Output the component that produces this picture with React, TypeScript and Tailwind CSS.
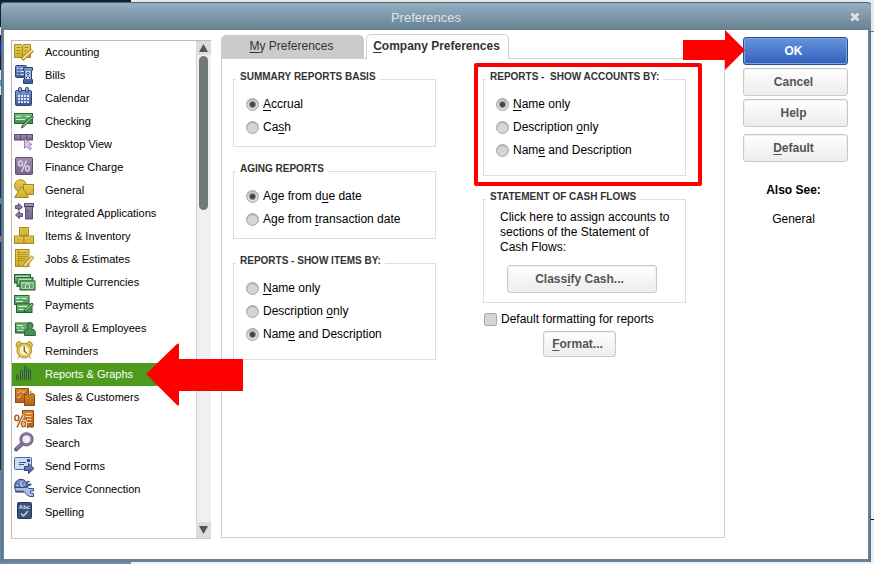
import { useState } from "react";
import type { ReactNode } from "react";

const GOLD = { fill: "url(#gold)", stroke: "#a8871c" };
const BLUE = { fill: "url(#blue)", stroke: "#2f4578" };
const GREEN = { fill: "url(#green)", stroke: "#2b6338" };
const PURPLE = { fill: "url(#purple)", stroke: "#5d4d70" };
const ORANGE = { fill: "url(#orange)", stroke: "#8f4a10" };

const categories: { name: string; icon: ReactNode }[] = [
  {
    name: "Accounting",
    icon: (
      <>
        <path {...GOLD} d="M1.500 3.500h7l1 1 1-1h7v13h-16z" />
        <path d="M9.500 5v11" stroke="#a8871c" />
        <path d="M3.500 6.500h4M3.500 9.500h4M3.500 12.500h4M11.500 6.500h4M11.500 9.500h2" stroke="#a8871c" />
        <path d="M9 18.500l10.500-9.500" stroke="#a8871c" strokeWidth="4" />
        <path d="M9.800 17.800l9.500-8.800" stroke="#f5dd91" strokeWidth="2.200" />
      </>
    ),
  },
  {
    name: "Bills",
    icon: (
      <>
        <rect {...BLUE} x="2.500" y="1.500" width="11" height="12" rx="1" />
        <path d="M4 4.500h1.500M7 4.500h5M4 7.500h1.500M7 7.500h4M4 10.500h1.500M7 10.500h4" stroke="#cfdcf5" />
        <path {...BLUE} d="M10.500 3.500h9v3h-1v9h1v4h-9v-4h1v-9h-1z" />
        <rect x="12.500" y="7" width="5" height="8" fill="#dde6f7" />
        <circle cx="15" cy="9.500" r="1.300" fill="none" stroke="#2f4578" />
        <path d="M13.500 14.500v-1.500l1.500-1.200 1.500 1.200v1.500" fill="none" stroke="#2f4578" />
      </>
    ),
  },
  {
    name: "Calendar",
    icon: (
      <>
        <rect {...BLUE} x="2.500" y="3.500" width="16" height="15" rx="1" />
        <rect x="5.500" y=".5" width="3" height="4.500" rx="1" fill="#8fa5d0" stroke="#2f4578" />
        <rect x="12.500" y=".5" width="3" height="4.500" rx="1" fill="#8fa5d0" stroke="#2f4578" />
        <path d="M5 9h11M5 12h11M5 15h11" stroke="#dce6f8" strokeWidth="2" strokeDasharray="2 1" />
      </>
    ),
  },
  {
    name: "Checking",
    icon: (
      <>
        <rect {...GREEN} x="1.500" y="3.500" width="18" height="10" />
        <path d="M3 6.500h5M13 6.500h4M3 9.500h9" stroke="#c8efcb" />
        <path d="M8.500 18l1-3 9.500-9 1.500 1.500-9.500 9z" fill="#82ca83" stroke="#255c31" />
      </>
    ),
  },
  {
    name: "Desktop View",
    icon: (
      <>
        <rect {...PURPLE} x="1.500" y="1.500" width="6" height="5.500" />
        <rect {...PURPLE} x="7.500" y="1.500" width="6" height="5.500" />
        <rect {...PURPLE} x="13.500" y="1.500" width="6" height="5.500" />
        <path d="M11.500 5.500l7.500 6-3 .7 2.500 3.300-2 1.300-2.500-3.500-2.500 2z" fill="#dcc6ef" stroke="#8a6ba5" strokeWidth=".8" />
      </>
    ),
  },
  {
    name: "Finance Charge",
    icon: (
      <>
        <rect {...PURPLE} x="2.500" y="1.500" width="17" height="17" rx="1" />
        <ellipse cx="7.500" cy="7.500" rx="1.900" ry="2.500" fill="none" stroke="#dfd0ee" strokeWidth="1.500" />
        <ellipse cx="14.500" cy="12.500" rx="1.900" ry="2.500" fill="none" stroke="#dfd0ee" strokeWidth="1.500" />
        <path d="M13.500 4.500l-5 11.500" stroke="#dfd0ee" strokeWidth="1.500" />
      </>
    ),
  },
  {
    name: "General",
    icon: (
      <>
        <circle {...GOLD} cx="7.500" cy="6.700" r="6" />
        <rect {...GOLD} x="10.500" y="5.500" width="10" height="10" />
        <path {...GOLD} d="M8.500 7.500l7 11h-14z" />
      </>
    ),
  },
  {
    name: "Integrated Applications",
    icon: (
      <>
        <path {...PURPLE} d="M2.500 3.500h3v-2l4 3.500-4 3.500v-2h-3z" />
        <path {...PURPLE} d="M9.500 11.500h-3v-2l-4 3.500 4 3.500v-2h3z" />
        <path {...PURPLE} d="M11.500 1.500h9v3.500h-1v12h-7v-12h-1z" />
        <path d="M12 4.500h8M14.500 8v2" stroke="#4a3b5c" />
        <path d="M13.500 2.500h5" stroke="#b9a4c9" />
      </>
    ),
  },
  {
    name: "Items & Inventory",
    icon: (
      <>
        <rect {...GOLD} x="6.500" y="2.500" width="9" height="8" />
        <rect {...GOLD} x="1.500" y="11" width="9.500" height="7.500" />
        <rect {...GOLD} x="11" y="11" width="9.500" height="7.500" />
        <path d="M10 3v3h2v-3M5 11.500v3h2v-3M15 11.500v3h2v-3" fill="#eed671" stroke="#c5a32c" strokeWidth=".8" />
      </>
    ),
  },
  {
    name: "Jobs & Estimates",
    icon: (
      <>
        <rect {...GOLD} x="2.500" y="1.500" width="13.500" height="17" />
        <path d="M4.500 4.500h10M4.500 6.500h10M4.500 8.500h10M4.500 10.500h9M4.500 12.500h8" stroke="#a98719" strokeWidth=".8" />
        <path d="M5.500 2v16" stroke="#a98719" strokeWidth=".7" />
        <path d="M11 18.500l9-10" stroke="#a8871c" strokeWidth="3.600" />
        <path d="M11.500 18l8-9" stroke="#f5dd91" strokeWidth="2" />
      </>
    ),
  },
  {
    name: "Multiple Currencies",
    icon: (
      <>
        <rect {...GREEN} x="1.500" y="3.500" width="16" height="8.500" />
        <path d="M3.500 9.500v-4h12" fill="none" stroke="#b3e0b6" />
        <rect {...GREEN} x="4" y="6.500" width="16" height="9" />
        <path d="M6 13v-4.500h12" fill="none" stroke="#b3e0b6" />
        <rect {...GREEN} x="7" y="10" width="15" height="9" />
        <rect x="8.800" y="11.800" width="11.500" height="5.500" fill="none" stroke="#b3e0b6" />
        <path d="M12.500 17v-2.500a2 2 0 0 1 4 0v2.500" fill="none" stroke="#d8f3d9" />
      </>
    ),
  },
  {
    name: "Payments",
    icon: (
      <>
        <rect {...GREEN} x="1.500" y="1.500" width="14.500" height="9" />
        <path d="M3 4.500h4M8.500 4.500h5M3 7.500h7" stroke="#d3f1d5" />
        <rect {...GREEN} x="3.500" y="10" width="15.500" height="8.500" />
        <path d="M5.500 12.500h9M5.500 15.500h5" stroke="#d3f1d5" />
        <path d="M11 18l1-2.500 7-6.500 1.500 1.500-7 6.500z" fill="#82ca83" stroke="#255c31" />
      </>
    ),
  },
  {
    name: "Payroll & Employees",
    icon: (
      <>
        <rect {...GREEN} x="2.500" y="6" width="14" height="10" />
        <path d="M4.500 8.500h5M4.500 11h2M8 11h3M4.500 13.500h6" stroke="#d3f1d5" />
        <path
          fill="#4f8f57"
          stroke="#2b6338"
          d="M11.500 18.500v-4q.5-2 4-2.500-1.500-1.500-1.500-3.500a3 3 0 0 1 6 0q0 2-1.500 3.500 3.500.5 3.800 2.500v4z"
        />
      </>
    ),
  },
  {
    name: "Reminders",
    icon: (
      <>
        <path {...GOLD} d="M3 5.500q0-4 4-4l1.500 2.500-4 4zM19.500 5.500q0-4-4-4l-1.500 2.500 4 4zM5 18.500l2-3M17.500 18.500l-2-3" />
        <circle cx="11.300" cy="10.500" r="7.300" fill="#e8cc5c" stroke="#a8871c" />
        <circle cx="11.300" cy="10.500" r="5.200" fill="#fcf5d3" stroke="#c9a72e" strokeWidth=".8" />
        <path d="M11.300 6.500v4.500l2.500 2.500" fill="none" stroke="#7d6724" strokeWidth="1.400" />
      </>
    ),
  },
  {
    name: "Reports & Graphs",
    icon: (
      <g fill="#56925a" stroke="#30523a">
        <rect x="3.500" y="12" width="2" height="4.500" rx=".8" />
        <rect x="7.500" y="7.500" width="2" height="9" rx=".8" />
        <rect x="11.500" y="3.500" width="2" height="13" rx=".8" />
        <rect x="15.500" y="6.500" width="2" height="10" rx=".8" />
      </g>
    ),
  },
  {
    name: "Sales & Customers",
    icon: (
      <>
        <rect {...ORANGE} x="2.500" y="2.500" width="13" height="14" />
        <path d="M4.500 6l1 1 2-2.500M4.500 11l1 1 2-2.500M9 6h3" fill="none" stroke="#f9d4a6" />
        <path {...ORANGE} d="M11.500 7.500l2 1.500 1.500-1.500 2 1.500 1.500-2 2 1 1 .5v11h-10z" />
        <path d="M13.500 7q0-2 1.500-2M17 7q0-2 1.500-2" fill="none" stroke="#8f4a10" />
      </>
    ),
  },
  {
    name: "Sales Tax",
    icon: (
      <>
        <path {...ORANGE} d="M9.500 1.500h11v16l-1.500 1-2-1-2 1-2-1-3.500 1z" />
        <path d="M12.500 4.500h6M12.500 7.500h6M14 10.500h4.500M14 13.500h4.500" stroke="#f9d4a6" />
        <g fill="none" stroke="#fff" strokeWidth="3.200">
          <ellipse cx="3.800" cy="9" rx="2" ry="2.700" />
          <ellipse cx="10.500" cy="15" rx="2" ry="2.700" />
          <path d="M10 5.500l-6 13" />
        </g>
        <g fill="none" stroke="#b0651f" strokeWidth="1.600">
          <ellipse cx="3.800" cy="9" rx="2" ry="2.700" />
          <ellipse cx="10.500" cy="15" rx="2" ry="2.700" />
          <path d="M10 5.500l-6 13" />
        </g>
      </>
    ),
  },
  {
    name: "Search",
    icon: (
      <>
        <path d="M9.500 11.500l-6.500 6" stroke="#6b5a7c" strokeWidth="4" strokeLinecap="round" />
        <path d="M8.500 12l-5 4.700" stroke="#9a88a9" strokeWidth="1.500" />
        <circle cx="13.500" cy="7.300" r="5.600" fill="#f2ebfa" stroke="#6b5a7c" strokeWidth="3" />
        <circle cx="13.500" cy="7.300" r="5.600" fill="none" stroke="#a190b0" strokeWidth="1" />
      </>
    ),
  },
  {
    name: "Send Forms",
    icon: (
      <>
        <rect x="1.500" y="2.500" width="17" height="12" rx="1" fill="#ccdaf3" stroke="#4a67a5" />
        <path d="M6 7.500h7M6 9.500h5" stroke="#3b5387" />
        <rect x="14" y="4" width="3" height="3" fill="#3b5387" />
        <path {...BLUE} d="M11.500 11.500h4v-3l5.500 5-5.500 5v-3h-4z" />
      </>
    ),
  },
  {
    name: "Service Connection",
    icon: (
      <>
        <circle {...BLUE} cx="8" cy="7.500" r="6.300" />
        <path d="M8 3.500v4.500h2.500M3.500 7.500h1.500M11 6.500h1" fill="none" stroke="#e4ecfb" />
        <path d="M17 4q-3-1.300-3 .7t3 1.600-3 2" fill="none" stroke="#3d548c" strokeWidth="1.300" />
        <path d="M1.500 9.500h13l1.500 1h4.500v2.500h-3v2l3 .5v3h-4l-3-2-2-2.500h-8z" fill="#a9bde2" stroke="#3b5288" />
        <path d="M2 13.500h9" stroke="#3b5288" strokeWidth="1.500" />
      </>
    ),
  },
  {
    name: "Spelling",
    icon: (
      <>
        <rect x="4.500" y="1.500" width="14" height="16" rx="1" fill="#3c5079" stroke="#27375b" />
        <text x="11.500" y="7.500" fontSize="6" fontWeight="bold" textAnchor="middle" fill="#d8e2f5">
          Abc
        </text>
        <path d="M8 12.500l2.500 2.500 4.500-5" fill="none" stroke="#c4d2ee" strokeWidth="1.500" />
      </>
    ),
  },
];

const gradients = [
  { id: "gold", from: "#e8cc5c", to: "#cfae2b" },
  { id: "blue", from: "#7d97cb", to: "#3f5896" },
  { id: "green", from: "#7cc47e", to: "#45874f" },
  { id: "purple", from: "#a18fb1", to: "#75628a" },
  { id: "orange", from: "#d9862f", to: "#b2611a" },
];

// "_" marks the access key: the letter after it is underlined
function Mnemonic({ text }: { text: string }) {
  const at = text.indexOf("_");
  if (at < 0) return <>{text}</>;
  return (
    <>
      {text.slice(0, at)}
      <span className="underline underline-offset-2">{text[at + 1]}</span>
      {text.slice(at + 2)}
    </>
  );
}

function Group({ title, className = "", children }: { title: string; className?: string; children: ReactNode }) {
  return (
    <fieldset className={`min-w-0 border border-[#dedede] px-0.5 ${className}`}>
      <legend className="whitespace-pre px-1 pb-[5px] text-[10px] font-bold leading-[10px] text-[#333]">{title}</legend>
      {children}
    </fieldset>
  );
}

function RadioList({ name, options, initial }: { name: string; options: string[]; initial: number }) {
  const [value, setValue] = useState(initial);
  return (
    <div className="flex flex-col pl-2.5 pt-1.5">
      {options.map((option, i) => (
        <label key={option} className="flex h-[23px] items-center gap-1">
          <input
            type="radio"
            name={name}
            checked={value === i}
            onChange={() => setValue(i)}
            className="size-[13px] shrink-0 appearance-none rounded-full border border-[#a8a8a8] bg-[#d6d6d6] shadow-[inset_0_1px_1px_#aaa] checked:bg-[radial-gradient(circle,#444_0,#444_2px,#dcdcdc_4px)]"
          />
          <span>
            <Mnemonic text={option} />
          </span>
        </label>
      ))}
    </div>
  );
}

function PushButton({ label, className = "" }: { label: string; className?: string }) {
  return (
    <button
      type="button"
      className={`rounded-[3px] border border-[#c8c8c8] bg-linear-to-b from-white to-[#ececec] pr-1 font-bold text-[#555] shadow-[inset_0_0_0_1px_#f0f0f0] ${className}`}
    >
      <Mnemonic text={label} />
    </button>
  );
}

function CategoryList() {
  const [selected, setSelected] = useState("Reports & Graphs");
  return (
    <nav className="relative flex w-[200px] shrink-0 border-y border-l border-[#bcbcbc] border-b-[#c8c8c8]">
      <ul className="min-w-0 flex-1 pb-3.5 text-[11px]">
        {categories.map(({ name, icon }) => (
          <li key={name}>
            <button
              type="button"
              onClick={() => setSelected(name)}
              className={`flex h-[23px] w-full items-center gap-[9px] pl-px text-left ${name === selected ? "bg-[#4e9a1d] text-white" : ""}`}
            >
              <svg width="23" height="23" viewBox="0 0 23 23" fill="none" className="shrink-0" aria-hidden="true">
                {icon}
              </svg>
              <span className="whitespace-nowrap">{name}</span>
            </button>
          </li>
        ))}
      </ul>
      <div className="flex w-[15px] flex-col items-center bg-[#f0f0f0] shadow-[inset_1px_0_0_#d0d0d0]">
        <div className="flex h-3.5 w-full items-center justify-center bg-[#dcdcdc]">
          <svg width="9" height="8" viewBox="0 0 9 8" aria-hidden="true">
            <path d="M4.500 0L9 8H0z" fill="#555" />
          </svg>
        </div>
        <div className="mt-px h-[154px] w-[9px] rounded-full bg-[#707978]" />
        <div className="mt-auto flex h-4 w-full items-center justify-center bg-[#dcdcdc]">
          <svg width="9" height="8" viewBox="0 0 9 8" aria-hidden="true">
            <path d="M4.500 8L0 0h9z" fill="#555" />
          </svg>
        </div>
      </div>
      <svg className="absolute left-[134px] top-[302px] z-10" width="98" height="63" viewBox="0 0 98 63" aria-hidden="true">
        <path d="M0 31L31 1q2-1 2 0v15h64v32H33v14q0 1-2 0z" fill="#f00" />
      </svg>
    </nav>
  );
}

function Backdrop() {
  return (
    <div className="absolute inset-0 flex bg-[#e9ebee]" aria-hidden="true">
      <div className="w-[131px] bg-[linear-gradient(#14202f_0_27px,#e8e8e0_27px_35px,#14202f_35px_42px,#2222a0_42px_54px,#14202f_54px_70px,#e8e8e8_70px_80px,#4a9cc8_80px_86px,#e8e8e8_86px_95px,#1c2c44_95px_198px,#2b9bd0_198px_204px,#1c2c44_204px_236px,#c06a80_236px_242px,#1c2c44_242px_470px,#6f8aa6_470px)]" />
      <div className="flex-1 bg-[linear-gradient(#e9e9e9_0_31px,#777_31px_32px,#f2f3f5_32px_519px,#000_519px_520px,#edf2f7_520px)]" />
    </div>
  );
}

export default function App() {
  return (
    <div className="relative flex min-h-screen flex-col pb-0.5 pl-px pr-[3px] pt-0.5 font-['Liberation_Sans',Arial,sans-serif] text-[12px] leading-[15px] text-black">
      <Backdrop />
      <svg className="absolute size-0" aria-hidden="true">
        <defs>
          {gradients.map(({ id, from, to }) => (
            <linearGradient key={id} id={id} x1="0" y1="0" x2="0" y2="1">
              <stop offset="0" stopColor={from} />
              <stop offset="1" stopColor={to} />
            </linearGradient>
          ))}
        </defs>
      </svg>

      <div className="relative flex flex-1 flex-col rounded-t-[4px] bg-[#688297] shadow-[inset_1px_0_0_#557083,inset_-1px_0_0_#557083]">
        <header className="flex h-7 items-center rounded-t-[4px] border-t border-[#4d6576] bg-linear-to-b from-[#96afc4] to-[#66818f] pl-0.5 pr-2.5">
          <h1 className="flex-1 pt-0.5 text-center text-[13px] text-[#dce4ea]">Preferences</h1>
          <button type="button" aria-label="Close" className="flex size-3 items-center justify-center">
            <svg width="10" height="10" viewBox="0 0 10 10" aria-hidden="true">
              <path d="M1.500 1.500l7 7M8.500 1.500l-7 7" stroke="#e0e3e5" strokeWidth="2.800" />
            </svg>
          </button>
        </header>

        <main className="mx-[3px] mb-[3px] flex flex-1 items-start bg-white pb-5 pl-[7px] pr-5 pt-1">
          <div className="flex min-w-0 flex-1 gap-2.5 self-stretch">
            <div className="flex pt-1.5">
              <CategoryList />
            </div>

            <div className="flex min-w-0 flex-1 flex-col pb-px">
              <div role="tablist" className="flex items-end gap-0.5">
                <button
                  role="tab"
                  type="button"
                  aria-selected="false"
                  className="h-[23px] w-[143px] rounded-t-[5px] bg-[#cbcbcb] pr-0.5 text-[#333]"
                >
                  <Mnemonic text="_My Preferences" />
                </button>
                <button
                  role="tab"
                  type="button"
                  aria-selected="true"
                  className="relative -mb-px h-[25px] w-[143px] whitespace-nowrap rounded-t-[5px] border border-b-0 border-[#d0d0d0] bg-white pb-0.5 pr-0.5 font-bold text-[#333]"
                >
                  <Mnemonic text="_Company Preferences" />
                </button>
              </div>

              <div
                role="tabpanel"
                className="grid flex-1 grid-cols-2 content-start gap-x-[47px] border border-[#d0d0d0] pl-[11px] pr-[38px] pt-[13px]"
              >
                <div className="flex flex-col gap-[17px]">
                  <Group title="SUMMARY REPORTS BASIS" className="pb-[7px]">
                    <RadioList name="basis" options={["_Accrual", "Ca_sh"]} initial={0} />
                  </Group>
                  <Group title="AGING REPORTS" className="pb-[7px]">
                    <RadioList name="aging" options={["Age from d_ue date", "Age from _transaction date"]} initial={0} />
                  </Group>
                  <Group title="REPORTS - SHOW ITEMS BY:" className="pb-[13px]">
                    <RadioList name="items" options={["_Name only", "Description _only", "Nam_e and Description"]} initial={2} />
                  </Group>
                </div>

                <div className="flex flex-col">
                  <div className="relative">
                    <Group title="REPORTS -  SHOW ACCOUNTS BY:" className="pb-[13px]">
                      <RadioList name="accounts" options={["_Name only", "Description _only", "Nam_e and Description"]} initial={0} />
                    </Group>
                    <div className="pointer-events-none absolute -bottom-2.5 -left-[9px] -right-4 -top-[9px] rounded-[2px] border-4 border-[#f00]" />
                  </div>
                  <Group title="STATEMENT OF CASH FLOWS" className="mt-4 pb-[9px]">
                    <p className="pl-3.5 pr-2 pt-[3px]">Click here to assign accounts to sections of the Statement of Cash Flows:</p>
                    <div className="flex justify-center pr-1.5 pt-2.5">
                      <PushButton label="Class_ify Cash..." className="h-7 w-[150px]" />
                    </div>
                  </Group>
                  <label className="mt-[9px] flex items-center gap-1 pl-px">
                    <input
                      type="checkbox"
                      className="size-[13px] shrink-0 appearance-none rounded-[2px] border border-[#a8a8a8] bg-[#d6d6d6] checked:bg-[#666]"
                    />
                    <span>Default formatting for reports</span>
                  </label>
                  <div className="flex justify-center pr-2.5 pt-1">
                    <PushButton label="_Format..." className="h-[26px] w-[73px]" />
                  </div>
                </div>
              </div>
            </div>
          </div>

          <aside className="relative ml-[18px] flex w-[105px] shrink-0 flex-col pt-[3px]">
            <button
              type="button"
              className="h-7 rounded-[3px] border border-[#2c4c92] bg-linear-to-b from-[#6595dc] to-[#3560bd] pr-1 font-bold text-white shadow-[inset_0_0_0_1px_#7ba3e2]"
            >
              OK
            </button>
            <PushButton label="Cancel" className="mt-[3px] h-7" />
            <PushButton label="Help" className="mt-[3px] h-7" />
            <PushButton label="_Default" className="mt-[7px] h-7" />
            <h2 className="mt-[21px] pr-1 text-center font-bold">Also See:</h2>
            <a href="#general" className="mt-3.5 pr-1 text-center">
              General
            </a>
            <svg className="absolute -left-[60px] -top-1" width="62" height="40" viewBox="0 0 62 40" aria-hidden="true">
              <path d="M0 10h42V0l20 20-20 20V30H0z" fill="#f00" />
            </svg>
          </aside>
        </main>
      </div>
    </div>
  );
}
